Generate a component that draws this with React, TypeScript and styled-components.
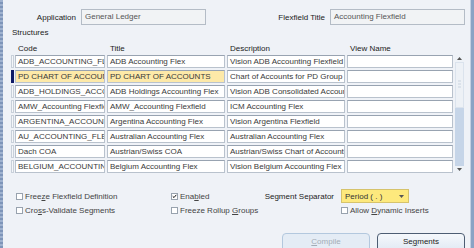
import React from 'react';
import styled, { createGlobalStyle } from 'styled-components';

const GlobalStyle = createGlobalStyle`
  html, body {
    margin: 0;
    padding: 0;
    width: 474px;
    height: 248px;
    overflow: hidden;
    background: #eff2f7;
  }
  body {
    font-family: "Liberation Sans", Arial, sans-serif;
    font-size: 8px;
    color: #333;
  }
`;

interface Structure {
  code: string;
  title: string;
  description: string;
}

const structures: Structure[] = [
  { code: 'ADB_ACCOUNTING_FLEX', title: 'ADB Accounting Flex', description: 'Vision ADB Accounting Flexfield' },
  { code: 'PD CHART OF ACCOUNTS', title: 'PD CHART OF ACCOUNTS', description: 'Chart of Accounts for PD Group' },
  { code: 'ADB_HOLDINGS_ACCOUNTING', title: 'ADB Holdings Accounting Flex', description: 'Vision ADB Consolidated Accounting' },
  { code: 'AMW_Accounting Flexfield', title: 'AMW_Accounting Flexfield', description: 'ICM Accounting Flex' },
  { code: 'ARGENTINA_ACCOUNTING', title: 'Argentina Accounting Flex', description: 'Vision Argentina Flexfield' },
  { code: 'AU_ACCOUNTING_FLEX', title: 'Australian Accounting Flex', description: 'Australian Accounting Flex' },
  { code: 'Dach COA', title: 'Austrian/Swiss COA', description: 'Austrian/Swiss Chart of Accounts' },
  { code: 'BELGIUM_ACCOUNTING', title: 'Belgium Accounting Flex', description: 'Vision Belgium Accounting Flex' },
];

const Window = styled.div`
  display: flex;
  width: 474px;
  height: 248px;
`;

const LeftStrip = styled.div`
  width: 3px;
  background: repeating-linear-gradient(180deg, #9fb2cf 0 2px, #7e95b9 2px 4px);
`;

const RightEdge = styled.div`
  width: 3px;
  background: #8aa3c4;
  border-left: 1px solid #c3d0e2;
`;

const Panel = styled.div`
  flex: 1;
  display: flex;
  flex-direction: column;
  padding-top: 9px;
  overflow: hidden;
`;

const TopRow = styled.div`
  display: grid;
  grid-template-columns: 73px 125px 114px 135px;
  column-gap: 5px;
  height: 16px;
  align-items: center;
`;

const FieldLabel = styled.div`
  text-align: right;
  color: #222;
`;

const ReadOnlyField = styled.div`
  height: 14px;
  line-height: 14px;
  padding-left: 3px;
  background: #f1f3f5;
  border: 1px solid #b4bcc6;
  color: #555;
  white-space: nowrap;
  overflow: hidden;
`;

const SectionTitle = styled.div`
  margin-top: 3px;
  padding-left: 9px;
  line-height: 10px;
  color: #222;
`;

const TableArea = styled.div`
  display: flex;
  margin-left: 8px;
  margin-top: 6px;
  gap: 2px;
`;

const Rows = styled.div`
  display: flex;
  flex-direction: column;
  gap: 2px;
`;

const Row = styled.div`
  display: flex;
  height: 13px;
`;

const HeaderRow = styled.div`
  display: flex;
  height: 10px;
  line-height: 10px;
  margin-bottom: -1px;
  color: #222;
`;

const Indicator = styled.div<{ $current?: boolean }>`
  width: 3px;
  margin-right: 1px;
  box-sizing: border-box;
  background: ${(p) => (p.$current ? '#0e1a66' : '#f4f6f9')};
  border: 1px solid ${(p) => (p.$current ? '#0e1a66' : '#c8d0da')};
`;

const HeaderSpacer = styled.div`
  width: 4px;
`;

const Cells = styled.div`
  display: flex;
  gap: 2px;
`;

const Cell = styled.div<{ $w: number; $hl?: boolean }>`
  width: ${(p) => p.$w}px;
  box-sizing: border-box;
  height: 13px;
  line-height: 11px;
  padding-left: 2px;
  border: 1px solid #b9c2cd;
  border-top-color: #98a3b1;
  background: ${(p) => (p.$hl ? '#fde9a8' : '#ffffff')};
  white-space: nowrap;
  overflow: hidden;
  color: #3a3a3a;
`;

const HeaderCell = styled.div<{ $w: number }>`
  width: ${(p) => p.$w}px;
  padding-left: 3px;
  box-sizing: border-box;
`;

const ScrollBar = styled.div`
  width: 9px;
  margin-top: 11px;
  display: flex;
  flex-direction: column;
  background: #c6d5e8;
`;

const ScrollArrow = styled.div`
  height: 7px;
  background: #eef2f7;
  display: flex;
  align-items: center;
  justify-content: center;
`;

const ScrollThumb = styled.div`
  height: 46px;
  background: #edf1f6;
  border: 1px solid #dbe3ed;
  box-sizing: border-box;
  display: flex;
  align-items: center;
  justify-content: center;
`;

const ScrollTrack = styled.div`
  flex: 1;
`;

const Options = styled.div`
  display: grid;
  grid-template-columns: 155px 93px 77px auto;
  grid-auto-rows: 14px;
  margin-top: 16px;
  padding-left: 13px;
  align-items: center;
`;

const CheckRow = styled.label<{ $span?: number }>`
  display: flex;
  align-items: center;
  gap: 2px;
  color: #444;
  white-space: nowrap;
  grid-column: span ${(p) => p.$span ?? 1};
`;

const Box = styled.span`
  width: 7px;
  height: 7px;
  box-sizing: border-box;
  border: 1px solid #98a2ae;
  background: #fff;
  display: inline-flex;
  align-items: center;
  justify-content: center;
`;

const SeparatorLabel = styled.div`
  text-align: right;
  padding-right: 7px;
  color: #222;
  white-space: nowrap;
`;

const Select = styled.div`
  width: 68px;
  height: 14px;
  box-sizing: border-box;
  border: 1px solid #d6c36c;
  background: #fde97d;
  display: flex;
  align-items: center;
  justify-content: space-between;
  padding: 0 4px 0 3px;
  color: #333;
`;

const ButtonBar = styled.div`
  display: flex;
  justify-content: flex-end;
  gap: 7px;
  margin-top: 16px;
  padding-right: 5px;
`;

const Button = styled.div<{ $disabled?: boolean }>`
  width: 88px;
  height: 20px;
  box-sizing: border-box;
  border-radius: 4px;
  border: 1px solid ${(p) => (p.$disabled ? '#b3c8de' : '#4d5d73')};
  background: ${(p) =>
    p.$disabled ? '#e4ecf5' : 'linear-gradient(180deg, #f5f8fc 0%, #dfe8f3 100%)'};
  color: ${(p) => (p.$disabled ? '#a3acb6' : '#222')};
  display: flex;
  justify-content: center;
  padding-top: 3px;
`;

const U = styled.span`
  text-decoration: underline;
`;

const Check = ({ checked }: { checked?: boolean }) => (
  <Box>
    {checked && (
      <svg width="7" height="7" viewBox="0 0 7 7">
        <path d="M1 3.2 L2.8 5 L6 1.2" stroke="#111" strokeWidth="1.4" fill="none" />
      </svg>
    )}
  </Box>
);

const widths = { code: 90, title: 118, desc: 118, view: 106 };

const App: React.FC = () => {
  return (
    <Window>
      <GlobalStyle />
      <LeftStrip />
      <Panel>
        <TopRow>
          <FieldLabel>Application</FieldLabel>
          <ReadOnlyField>General Ledger</ReadOnlyField>
          <FieldLabel>Flexfield Title</FieldLabel>
          <ReadOnlyField>Accounting Flexfield</ReadOnlyField>
        </TopRow>

        <SectionTitle>Structures</SectionTitle>

        <TableArea>
          <Rows>
            <HeaderRow>
              <HeaderSpacer />
              <Cells>
                <HeaderCell $w={widths.code}>Code</HeaderCell>
                <HeaderCell $w={widths.title}>Title</HeaderCell>
                <HeaderCell $w={widths.desc}>Description</HeaderCell>
                <HeaderCell $w={widths.view}>View Name</HeaderCell>
              </Cells>
            </HeaderRow>
            {structures.map((s, i) => (
              <Row key={s.code}>
                <Indicator $current={i === 1} />
                <Cells>
                  <Cell $w={widths.code} $hl={i === 1}>{s.code}</Cell>
                  <Cell $w={widths.title} $hl={i === 1}>{s.title}</Cell>
                  <Cell $w={widths.desc}>{s.description}</Cell>
                  <Cell $w={widths.view} />
                </Cells>
              </Row>
            ))}
          </Rows>
          <ScrollBar>
            <ScrollArrow>
              <svg width="5" height="3" viewBox="0 0 5 3">
                <path d="M0 3 L2.5 0 L5 3 Z" fill="#555" />
              </svg>
            </ScrollArrow>
            <ScrollThumb>
              <svg width="3" height="10" viewBox="0 0 3 10">
                <path d="M0 1 H3 M0 4 H3 M0 7 H3" stroke="#c9d3df" strokeWidth="1" />
              </svg>
            </ScrollThumb>
            <ScrollTrack />
            <ScrollArrow>
              <svg width="5" height="3" viewBox="0 0 5 3">
                <path d="M0 0 L2.5 3 L5 0 Z" fill="#555" />
              </svg>
            </ScrollArrow>
          </ScrollBar>
        </TableArea>

        <Options>
          <CheckRow>
            <Check />
            <span>
              Free<U>z</U>e Flexfield Definition
            </span>
          </CheckRow>
          <CheckRow>
            <Check checked />
            <span>
              Ena<U>b</U>led
            </span>
          </CheckRow>
          <SeparatorLabel>Segment Separator</SeparatorLabel>
          <Select>
            <span>Period ( . )</span>
            <svg width="5" height="3" viewBox="0 0 5 3">
              <path d="M0 0 L2.5 3 L5 0 Z" fill="#555" />
            </svg>
          </Select>

          <CheckRow>
            <Check />
            <span>
              Cro<U>s</U>s-Validate Segments
            </span>
          </CheckRow>
          <CheckRow $span={2}>
            <Check />
            <span>
              Freeze Rollup <U>G</U>roups
            </span>
          </CheckRow>
          <CheckRow>
            <Check />
            <span>
              Allow <U>D</U>ynamic Inserts
            </span>
          </CheckRow>
        </Options>

        <ButtonBar>
          <Button $disabled>
            <span>
              <U>C</U>ompile
            </span>
          </Button>
          <Button>
            <span>
              Se<U>g</U>ments
            </span>
          </Button>
        </ButtonBar>
      </Panel>
      <RightEdge />
    </Window>
  );
};

export default App;
